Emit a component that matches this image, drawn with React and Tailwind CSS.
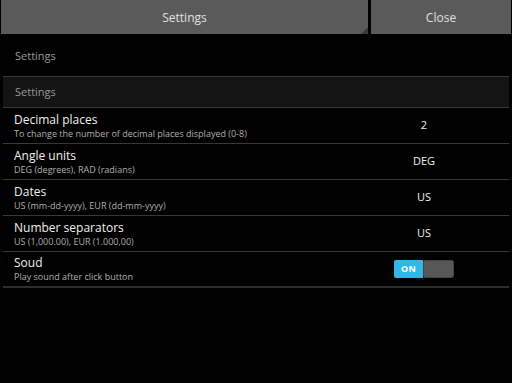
import React from 'react';

const rows = [
  { title: 'Decimal places', sub: 'To change the number of decimal places displayed (0-8)', value: '2' },
  { title: 'Angle units', sub: 'DEG (degrees), RAD (radians)', value: 'DEG' },
  { title: 'Dates', sub: 'US (mm-dd-yyyy), EUR (dd-mm-yyyy)', value: 'US' },
  { title: 'Number separators', sub: 'US (1,000.00), EUR (1.000,00)', value: 'US' },
];

function Toggle() {
  return (
    <div className="flex h-[18px] w-[60px] rounded-[2px] overflow-hidden">
      <div className="w-[29px] bg-[#33b5e5] flex items-center justify-center text-white text-[9px] font-bold tracking-wide">ON</div>
      <div className="flex-1 bg-[#575757] border border-[#444] rounded-[2px]" />
    </div>
  );
}

export default function App() {
  return (
    <div className="w-[512px] h-[383px] bg-black overflow-hidden text-[#e6e6e6]" style={{ fontFamily: '"Open Sans", "Noto Sans", sans-serif' }}>
      {/* Action bar */}
      <div className="flex h-[35px] gap-[3px] px-[1px] pb-[1px]">
        <button className="relative flex-1 flex items-center justify-center pt-[1px] bg-[#5a5a5a] text-[12px] text-[#e0e0e0]">
          Settings
          <span className="absolute right-0 bottom-0 w-0 h-0 border-l-[7px] border-l-transparent border-b-[7px] border-b-[#3a3a3a]" />
        </button>
        <button className="w-[140px] flex items-center justify-center pt-[1px] bg-[#5a5a5a] text-[12px] text-[#e0e0e0]">
          Close
        </button>
      </div>

      <div className="h-[41px] flex items-center pt-[2px] pl-[15px] text-[11px] text-[#9a9a9a]">Settings</div>

      <div className="mx-[3px] border-t border-b border-[#383838]">
        <div className="h-[30px] bg-[#141414] flex items-center pl-[12px] text-[11px] text-[#9a9a9a]">Settings</div>
      </div>

      <div className="mx-[3px]">
        {rows.map((r) => (
          <div key={r.title} className="h-[36px] flex items-center border-b border-[#383838]">
            <div className="flex-1 pl-[11px] leading-none">
              <div className="text-[12px] text-[#f0f0f0]">{r.title}</div>
              <div className="mt-[3px] text-[9px] text-[#b0b0b0]">{r.sub}</div>
            </div>
            <div className="w-[160px] text-center text-[11px] text-[#f0f0f0] pr-[10px]">{r.value}</div>
          </div>
        ))}
        <div className="h-[36px] flex items-center border-b-2 border-[#2e2e2e]">
          <div className="flex-1 pl-[11px] leading-none">
            <div className="text-[12px] text-[#f0f0f0]">Soud</div>
            <div className="mt-[3px] text-[9px] text-[#b0b0b0]">Play sound after click button</div>
          </div>
          <div className="w-[160px] flex justify-center pr-[10px]">
            <Toggle />
          </div>
        </div>
      </div>
    </div>
  );
}
